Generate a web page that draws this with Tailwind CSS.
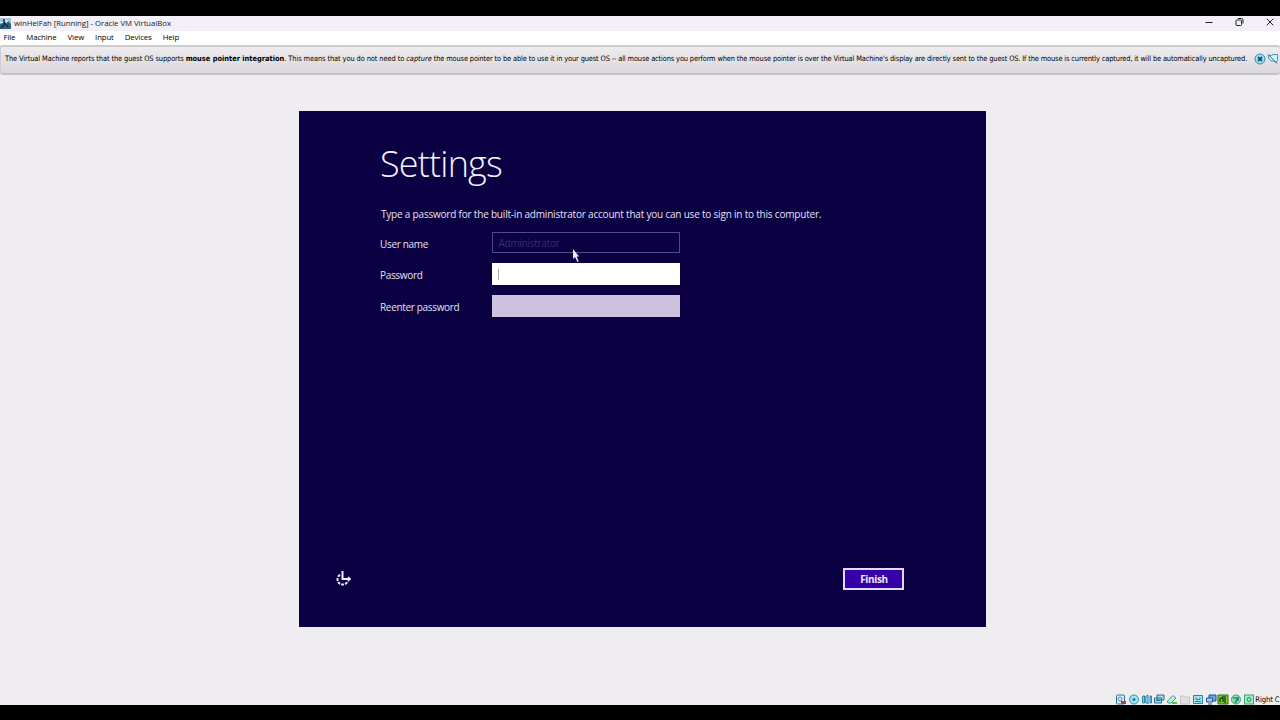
<!DOCTYPE html>
<html lang="en">

<head>
	<meta charset="UTF-8">
	<meta name="viewport" content="width=device-width, initial-scale=1.0">
	<title>winHelFah [Running] - Oracle VM VirtualBox</title>
	<script src="https://cdn.jsdelivr.net/npm/@tailwindcss/browser@4"></script>
</head>

<body class="flex h-screen w-screen flex-col overflow-hidden bg-[#efedf0] font-['Open_Sans',sans-serif] text-black">
	<div class="h-4 shrink-0 bg-black"></div>
	<header class="flex h-[15px] shrink-0 items-center bg-[#f2eff7]">
		<svg class="h-[11px] w-[11px]" viewBox="0 0 11 11">
			<path fill="#9fc4d8" d="M0 0h11v11H0z" />
			<path fill="#315d80" d="M0 6l3-1 3 1 2-3 3 3v5H0z" />
			<path fill="none" stroke="#122f4a" stroke-width="1.5" d="M4 1v6l-3 3M4 4l4 5" />
			<path fill="#e0f2f8" d="M5 1l3 2-2 2zM0 4h3v1H0z" />
		</svg>
		<h1 class="ml-[3px] pb-px text-[7.8px] leading-[14px] tracking-[-0.04px] whitespace-nowrap text-[#222]">winHelFah [Running] - Oracle VM VirtualBox</h1>
		<div class="ml-auto flex items-center gap-[22px] pr-[6px] pb-[3px]">
			<svg class="h-2 w-2" viewBox="0 0 8 8" fill="none" stroke="#222"><path d="M.5 4.5h7" /></svg>
			<svg class="h-2 w-[9px]" viewBox="0 0 9 8" fill="none" stroke="#222"><rect x="1" y="2" width="5.5" height="5.5" rx="1" /><path d="M3 .5h3.5Q8 .5 8 2v3.5" /></svg>
			<svg class="h-2 w-2" viewBox="0 0 8 8" fill="none" stroke="#222"><path d="M.8.8l6.4 6.4M7.2.8L.8 7.2" /></svg>
		</div>
	</header>
	<nav class="flex h-[14px] shrink-0 items-center gap-[11px] bg-white pb-px pl-[3.5px] text-[7.8px] leading-[13px] tracking-[-0.12px]">
		<span>File</span>
		<span>Machine</span>
		<span>View</span>
		<span>Input</span>
		<span>Devices</span>
		<span>Help</span>
	</nav>
	<div class="flex h-[30px] shrink-0 items-center rounded-[3px] border-t-2 border-b-2 border-l border-t-[#cecccf] border-b-[#c4c2c5] border-l-[#cecccf] bg-linear-to-b from-[#eeecef] to-[#dad8db] pb-[3px] pl-1">
		<p class="shrink-0 font-['DejaVu_Sans_Condensed','DejaVu_Sans',sans-serif] text-[7.4px] leading-[13px] whitespace-pre"><span class="tracking-[-0.1px]">The Virtual Machine reports that the guest OS supports </span><b>mouse pointer integration</b><span class="tracking-[-0.09px]">. This means that you do not need to </span><i>capture</i><span class="tracking-[-0.137px]"> the mouse pointer to be able to use it in your guest OS -- all mouse actions you perform when the mouse pointer is over the Virtual Machine's display are directly sent to the guest OS. If the mouse is currently captured, it will be automatically uncaptured.</span></p>
		<div class="ml-auto flex items-center gap-px pr-px">
			<svg class="h-3 w-3" viewBox="0 0 12 12">
				<circle cx="6" cy="6" r="5" fill="#a5def3" stroke="#2c8eb8" />
				<path stroke="#174f6b" stroke-width="1.800" d="M4 4l4 4M8 4L4 8" />
			</svg>
			<svg class="h-3 w-3" viewBox="0 0 12 12" fill="#d8f0f8" stroke="#4594b3">
				<path d="M1.500 2.500h3L6 1.500h4.500v6L8.500 9.500 7 8H4L1.500 5z" />
				<path stroke="#286f91" d="M.8 1.200l9.500 9.300" />
			</svg>
		</div>
	</div>
	<main class="flex min-h-0 grow flex-col">
		<section class="mt-9 ml-[299px] flex h-[516px] w-[687px] shrink-0 flex-col bg-[#0a0042] pt-[29px] pr-[82px] pl-[81px] text-[#e6e0f5]">
			<h2 class="text-[36px] leading-[48px] font-light tracking-[-0.8px] text-[#f4f0ff]">Settings</h2>
			<p class="mt-[18px] pl-px text-[10px] leading-4 tracking-[-0.2px] whitespace-nowrap">Type a password for the built-in administrator account that you can use to sign in to this computer.</p>
			<form class="mt-[10px] flex flex-col gap-[10px] text-[10px] tracking-[-0.33px]">
				<div class="flex h-[21px] items-center">
					<label class="w-[111.500px] pt-[3px]">User name</label>
					<div class="relative flex h-[21px] w-[188px] items-center border border-[#57468a] pt-[2px] pl-1.5 tracking-[-0.28px] text-[#3f2b75]">
						Administrator
						<svg class="absolute top-4 left-[79px] h-[14px] w-2" viewBox="0 0 8 14" fill="#f4efff"><path d="M1 0v10l2-2 2.500 5 1.200-.6L4.600 7.500H7z" /></svg>
					</div>
				</div>
				<div class="flex h-[22px] items-center">
					<label class="w-[111.500px] pt-[2px]">Password</label>
					<div class="flex h-[22px] w-[188px] items-center bg-white pl-[6.500px]"><span class="h-[11px] w-px bg-[#aaa]"></span></div>
				</div>
				<div class="flex h-[22px] items-center">
					<label class="w-[111.500px] pt-[2px]">Reenter password</label>
					<div class="h-[22px] w-[188px] bg-[#cec1df]"></div>
				</div>
			</form>
			<footer class="mt-auto mb-[37px] -ml-[46px] flex items-center justify-between">
				<svg class="h-[18px] w-[18px]" viewBox="0 0 18 18" fill="none" stroke="#f0ebff" stroke-width="2">
					<path stroke-dasharray="2.800 1.100" d="M6 4.800A5.300 5.300 0 1 0 13.800 11" />
					<path d="M8.500 1v8h8" />
					<path stroke-width="1.300" d="M14 7L16.200 9 14 11" />
				</svg>
				<button class="h-[22px] w-[61px] border-2 border-[#e4d8fa] bg-[#3500a5] pl-px text-[10px] leading-[18px] font-bold tracking-[-0.33px] text-[#f0eaff]">Finish</button>
			</footer>
		</section>
		<div class="mt-auto flex h-[11px] shrink-0 items-center gap-[0.800px] overflow-hidden pl-[1115px]">
			<svg class="h-[11px] w-3 shrink-0" viewBox="0 0 12 11"><rect x="1.500" y="1" width="8" height="9" rx="1" fill="#dceffa" stroke="#317199" /><circle cx="5" cy="5" r="2" fill="none" stroke="#448bb2" /><path fill="#b3413e" d="M6 7h5v3H6z" /></svg>
			<svg class="h-[11px] w-3 shrink-0" viewBox="0 0 12 11"><circle cx="6" cy="5.500" r="4.500" fill="#a7e1f4" stroke="#2493be" /><circle cx="6" cy="5.500" r="1.500" fill="#187eaa" /></svg>
			<svg class="h-[11px] w-3 shrink-0" viewBox="0 0 12 11"><path fill="#87cbe2" stroke="#2f86a8" d="M1.500 2h2v7h-2zM4 3l3-2v9L4 8zM9 2h1.500v7H9z" /></svg>
			<svg class="h-[11px] w-3 shrink-0" viewBox="0 0 12 11"><path fill="#a9dceb" stroke="#24718e" d="M4 1h7v5H4zM1.500 4h7v5h-7z" /><path stroke="#24718e" d="M3 6.500h4" /></svg>
			<svg class="h-[11px] w-3 shrink-0" viewBox="0 0 12 11"><path fill="#b9ebdf" stroke="#3d9c9c" d="M1.500 7L7 1.500l3 2.500-5 5H2z" /><path stroke="#60b957" stroke-width="2" d="M6 9h5" /></svg>
			<svg class="h-[11px] w-3 shrink-0" viewBox="0 0 12 11"><path fill="#e2dfe3" stroke="#c8c5ca" d="M1.500 2h4l1 1h4v7h-9z" /></svg>
			<svg class="h-[11px] w-3 shrink-0" viewBox="0 0 12 11"><path fill="#a9e3f3" stroke="#2781a8" d="M1.500 1.500h9v8h-9z" /><path fill="none" stroke="#2781a8" d="M4 3.500v2h4v-2M3 7.500h6" /></svg>
			<svg class="h-[11px] w-3 shrink-0" viewBox="0 0 12 11"><path fill="#5faae2" stroke="#254f97" d="M4 1h7v6H4z" /><path fill="#9fcdf0" stroke="#254f97" d="M1.500 4h6v4h-6zM3 10h4" /></svg>
			<svg class="h-[11px] w-3 shrink-0" viewBox="0 0 12 11"><path fill="#77cc29" stroke="#316c20" d="M1 1h10v9H1z" /><path fill="none" stroke="#214c1b" stroke-width="1.500" d="M3 8V5l3-2v5M8 2v7" /></svg>
			<svg class="h-[11px] w-3 shrink-0" viewBox="0 0 12 11"><circle cx="6" cy="5.500" r="4.500" fill="#98e2a8" stroke="#31a766" /><path fill="none" stroke="#24829a" stroke-width="1.500" d="M3 4h5L5 9M8 3v4" /></svg>
			<svg class="h-[11px] w-3 shrink-0" viewBox="0 0 12 11"><rect x="1.500" y="1" width="9" height="9" fill="#a5edc8" stroke="#34a776" /><circle cx="6" cy="5.500" r="2" fill="none" stroke="#218763" /></svg>
			<span class="-ml-[0.500px] shrink-0 font-['DejaVu_Sans_Condensed','DejaVu_Sans',sans-serif] text-[7.600px] leading-[11px] tracking-[-0.1px] whitespace-nowrap">Right C</span>
		</div>
	</main>
	<div class="h-[15px] shrink-0 bg-black"></div>
</body>

</html>
